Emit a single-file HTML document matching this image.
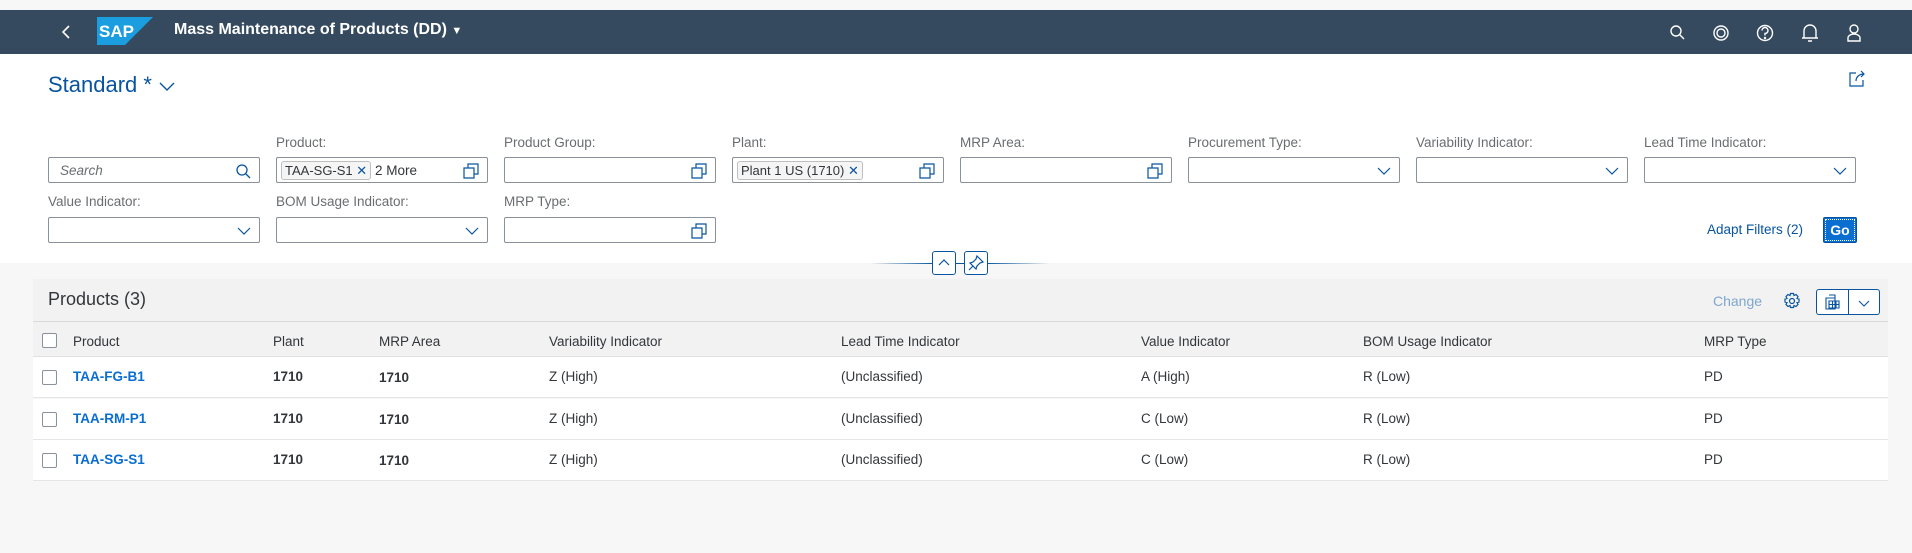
<!DOCTYPE html><html><head><style>
*{box-sizing:border-box;margin:0;padding:0}
body{width:1912px;height:553px;overflow:hidden;background:#f7f7f7;font-family:"Liberation Sans",sans-serif;color:#32363a;position:relative}
.a{position:absolute}
.hdr{left:0;top:10px;width:1912px;height:44px;background:#354a5f}
.white{left:0;top:54px;width:1912px;height:209px;background:#fff}
.lbl{font-size:13.5px;color:#6a6d70}
.inp{height:26px;width:212px;border:1px solid #89919a;border-radius:2px;background:#fff}
.ico{position:absolute;right:8px;top:5px}
.tok{position:absolute;left:4px;top:3px;height:19px;border:1px solid #bfbfbf;border-radius:3px;background:#f5f5f5;font-size:13px;padding:0 3px;line-height:17px;color:#32363a}
.tok b{color:#0854a0;font-weight:normal}
.th{font-size:13.5px;color:#32363a;top:334px}
.cb{width:15px;height:15px;border:1px solid #89919a;border-radius:2px;background:#fff;left:42px}
.row{left:33px;width:1855px;height:41px;background:#fff;border-bottom:1px solid #e5e5e5}
.c{font-size:13.5px;position:absolute}
</style></head><body>
<div class="a hdr"></div>
<svg class="a" style="left:60px;top:24px" width="12" height="16"><path d="M9 2L3 8l6 6" stroke="#fff" stroke-width="1.6" fill="none"/></svg>
<svg class="a" style="left:97px;top:17px" width="56" height="28"><polygon points="0,0 56,0 28,28 0,28" fill="#1a9ee0"/><text x="2" y="20" font-family="Liberation Sans" font-weight="bold" font-size="17" fill="#fff">SAP</text></svg>
<div class="a" style="left:174px;top:21px;color:#fff;font-weight:bold;font-size:16px">Mass Maintenance of Products (DD) <span style="font-size:11px">▼</span></div>
<svg class="a" style="left:1668px;top:23px" width="200" height="20" fill="none" stroke="#fff" stroke-width="1.4">
<circle cx="8" cy="8" r="5"/><path d="M12 12l4 4"/>
<circle cx="53" cy="10" r="7"/><circle cx="53" cy="10" r="4"/>
<circle cx="97" cy="10" r="7.5"/><path d="M94 7.5a3 3 0 1 1 3 3v2"/><circle cx="97" cy="15" r=".5"/>
<path d="M136 15V8a6 6 0 0 1 12 0v7h2h-16M140 18h4"/>
<circle cx="186" cy="6" r="4"/><path d="M180 18v-3a6 4 0 0 1 12 0v3z"/>
</svg>
<div class="a white"></div>
<div class="a" style="left:48px;top:72px;font-size:22px;color:#0854a0">Standard * <svg width="18" height="12"><path d="M2 3l7 7 7-7" stroke="#0854a0" stroke-width="1.4" fill="none"/></svg></div>
<svg class="a" style="left:1848px;top:70px" width="18" height="18" fill="none" stroke="#0854a0" stroke-width="1.2"><path d="M8 3H2v13h13v-6M8 11c0-4 3-7 8-7M13 1l3 3-3 3"/></svg>

<div class="a lbl" style="left:276px;top:135px">Product:</div>
<div class="a lbl" style="left:504px;top:135px">Product Group:</div>
<div class="a lbl" style="left:732px;top:135px">Plant:</div>
<div class="a lbl" style="left:960px;top:135px">MRP Area:</div>
<div class="a lbl" style="left:1188px;top:135px">Procurement Type:</div>
<div class="a lbl" style="left:1416px;top:135px">Variability Indicator:</div>
<div class="a lbl" style="left:1644px;top:135px">Lead Time Indicator:</div>
<div class="a lbl" style="left:48px;top:194px">Value Indicator:</div>
<div class="a lbl" style="left:276px;top:194px">BOM Usage Indicator:</div>
<div class="a lbl" style="left:504px;top:194px">MRP Type:</div>

<svg width="0" height="0" style="position:absolute"><defs>
<g id="vh"><path d="M1 5h10v10H1zM5 5V1h10v10h-4" fill="none" stroke="#0854a0" stroke-width="1.2"/></g>
<g id="dd"><path d="M1 1l6 6 6-6" fill="none" stroke="#0854a0" stroke-width="1.2"/></g></defs></svg>

<div class="a inp" style="left:48px;top:157px"><span style="position:absolute;left:11px;top:5px;font-style:italic;color:#6a6d70;font-size:13.5px">Search</span><svg class="ico" width="16" height="16" fill="none" stroke="#0854a0" stroke-width="1.3"><circle cx="7" cy="7" r="5"/><path d="M11 11l4 4"/></svg></div>
<div class="a inp" style="left:276px;top:157px"><div class="tok">TAA-SG-S1 <b>✕</b></div><span style="position:absolute;left:98px;top:5px;font-size:13.5px">2 More</span><svg class="ico" width="16" height="16"><use href="#vh"/></svg></div>
<div class="a inp" style="left:504px;top:157px"><svg class="ico" width="16" height="16"><use href="#vh"/></svg></div>
<div class="a inp" style="left:732px;top:157px"><div class="tok">Plant 1 US (1710) <b>✕</b></div><svg class="ico" width="16" height="16"><use href="#vh"/></svg></div>
<div class="a inp" style="left:960px;top:157px"><svg class="ico" width="16" height="16"><use href="#vh"/></svg></div>
<div class="a inp" style="left:1188px;top:157px"><svg class="ico" style="top:9px" width="14" height="9"><use href="#dd"/></svg></div>
<div class="a inp" style="left:1416px;top:157px"><svg class="ico" style="top:9px" width="14" height="9"><use href="#dd"/></svg></div>
<div class="a inp" style="left:1644px;top:157px"><svg class="ico" style="top:9px" width="14" height="9"><use href="#dd"/></svg></div>
<div class="a inp" style="left:48px;top:217px"><svg class="ico" style="top:9px" width="14" height="9"><use href="#dd"/></svg></div>
<div class="a inp" style="left:276px;top:217px"><svg class="ico" style="top:9px" width="14" height="9"><use href="#dd"/></svg></div>
<div class="a inp" style="left:504px;top:217px"><svg class="ico" width="16" height="16"><use href="#vh"/></svg></div>

<div class="a" style="left:1707px;top:222px;font-size:13.5px;color:#0854a0">Adapt Filters (2)</div>
<div class="a" style="left:1823px;top:217px;width:34px;height:26px;background:#0a6ed1;border:1px solid #0854a0;border-radius:2px;color:#fff;font-weight:bold;font-size:14px;text-align:center;line-height:24px;outline:1px dotted #fff;outline-offset:-3px">Go</div>

<div class="a" style="left:870px;top:263px;width:180px;height:1px;background:linear-gradient(90deg,rgba(8,84,160,0),#0854a0 35%,#0854a0 65%,rgba(8,84,160,0))"></div>
<div class="a" style="left:932px;top:251px;width:24px;height:24px;background:#fff;border:1px solid #0854a0;border-radius:3px"><svg width="22" height="22"><path d="M6 13l5-5 5 5" fill="none" stroke="#0854a0" stroke-width="1.2"/></svg></div>
<div class="a" style="left:964px;top:251px;width:24px;height:24px;background:#fff;border:1px solid #0854a0;border-radius:3px"><svg width="22" height="22" fill="none" stroke="#0854a0" stroke-width="1.2"><path d="M12 4l6 6-3 1-3 3-1 3-6-6 3-1 3-3zM8 14l-4 4"/></svg></div>

<div class="a" style="left:33px;top:279px;width:1855px;height:43px;background:#f2f2f2;border-bottom:1px solid #d9d9d9"></div>
<div class="a" style="left:48px;top:289px;font-size:18px;color:#32363a">Products (3)</div>
<div class="a" style="left:1713px;top:293px;font-size:14px;color:#7fa6cf">Change</div>
<svg class="a" style="left:1783px;top:292px" width="18" height="18" fill="none" stroke="#0854a0" stroke-width="1.2"><circle cx="9" cy="9" r="2.5"/><path d="M7.5 1.5h3l.5 2 2-1 2 2-1 2 2 .5v3l-2 .5 1 2-2 2-2-1-.5 2h-3l-.5-2-2 1-2-2 1-2-2-.5v-3l2-.5-1-2 2-2 2 1z"/></svg>
<div class="a" style="left:1816px;top:289px;width:64px;height:26px;border:1px solid #0854a0;border-radius:3px;background:#fff"><div style="position:absolute;left:31px;top:0;width:1px;height:24px;background:#0854a0"></div>
<svg style="position:absolute;left:8px;top:4px" width="16" height="16" fill="none" stroke="#0854a0" stroke-width="1.1"><path d="M4 1h6v4M1 4h9v11H1zM4 7h10v7H4zM4 10.5h10M7.5 7v7M11 7v7"/></svg>
<svg style="position:absolute;left:41px;top:10px" width="12" height="7"><path d="M1 1l5 5 5-5" fill="none" stroke="#0854a0" stroke-width="1.1"/></svg></div>

<div class="a" style="left:33px;top:322px;width:1855px;height:35px;background:#f2f2f2;border-bottom:1px solid #e0e0e0"></div>
<div class="a cb" style="top:333px"></div>
<div class="a th" style="left:73px">Product</div>
<div class="a th" style="left:273px">Plant</div>
<div class="a th" style="left:379px">MRP Area</div>
<div class="a th" style="left:549px">Variability Indicator</div>
<div class="a th" style="left:841px">Lead Time Indicator</div>
<div class="a th" style="left:1141px">Value Indicator</div>
<div class="a th" style="left:1363px">BOM Usage Indicator</div>
<div class="a th" style="left:1704px">MRP Type</div>

<div class="a row" style="top:357px"><div class="a cb" style="left:9px;top:13px"></div><span class="c" style="left:40px;top:12px;color:#0a6ed1;font-weight:bold">TAA-FG-B1</span><span class="c" style="left:240px;top:12px;font-weight:bold">1710</span><span class="c" style="left:346px;top:13px;font-weight:bold">1710</span><span class="c" style="left:516px;top:12px">Z (High)</span><span class="c" style="left:808px;top:12px">(Unclassified)</span><span class="c" style="left:1108px;top:12px">A (High)</span><span class="c" style="left:1330px;top:12px">R (Low)</span><span class="c" style="left:1671px;top:12px">PD</span></div>
<div class="a row" style="top:399px"><div class="a cb" style="left:9px;top:13px"></div><span class="c" style="left:40px;top:12px;color:#0a6ed1;font-weight:bold">TAA-RM-P1</span><span class="c" style="left:240px;top:12px;font-weight:bold">1710</span><span class="c" style="left:346px;top:13px;font-weight:bold">1710</span><span class="c" style="left:516px;top:12px">Z (High)</span><span class="c" style="left:808px;top:12px">(Unclassified)</span><span class="c" style="left:1108px;top:12px">C (Low)</span><span class="c" style="left:1330px;top:12px">R (Low)</span><span class="c" style="left:1671px;top:12px">PD</span></div>
<div class="a row" style="top:440px"><div class="a cb" style="left:9px;top:13px"></div><span class="c" style="left:40px;top:12px;color:#0a6ed1;font-weight:bold">TAA-SG-S1</span><span class="c" style="left:240px;top:12px;font-weight:bold">1710</span><span class="c" style="left:346px;top:13px;font-weight:bold">1710</span><span class="c" style="left:516px;top:12px">Z (High)</span><span class="c" style="left:808px;top:12px">(Unclassified)</span><span class="c" style="left:1108px;top:12px">C (Low)</span><span class="c" style="left:1330px;top:12px">R (Low)</span><span class="c" style="left:1671px;top:12px">PD</span></div>
</body></html>
